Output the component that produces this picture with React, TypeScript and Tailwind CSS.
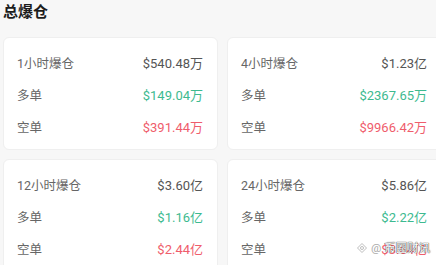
import React from "react";

interface Liq {
  label: string;
  total: string;
  long: string;
  short: string;
}

const data: Liq[] = [
  { label: "1小时爆仓", total: "$540.48万", long: "$149.04万", short: "$391.44万" },
  { label: "4小时爆仓", total: "$1.23亿", long: "$2367.65万", short: "$9966.42万" },
  { label: "12小时爆仓", total: "$3.60亿", long: "$1.16亿", short: "$2.44亿" },
  { label: "24小时爆仓", total: "$5.86亿", long: "$2.22亿", short: "$3.64亿" },
];

function Row({ label, value, color }: { label: string; value: string; color: string }) {
  return (
    <div className="flex h-5 items-center justify-between">
      <span className="text-[12.5px] text-[#666]">{label}</span>
      <span className={`text-[13px] ${color}`}>{value}</span>
    </div>
  );
}

function Card({ item }: { item: Liq }) {
  return (
    <div className="flex h-[113px] flex-col gap-3 rounded-md border border-[#efefef] bg-white pl-[13px] pr-[14px] pt-4">
      <Row label={item.label} value={item.total} color="text-[#555]" />
      <Row label="多单" value={item.long} color="text-[#3dba90]" />
      <Row label="空单" value={item.short} color="text-[#ef5d6c]" />
    </div>
  );
}

export default function App() {
  return (
    <div
      className="relative h-[265px] w-[436px] overflow-hidden bg-[#f7f7f7]"
      style={{ fontFamily: '"Roboto", "Noto Sans CJK SC", sans-serif' }}
    >
      <h2 className="h-6 pl-[3px] text-[15px] font-bold leading-6 text-[#1c1c1c]">总爆仓</h2>
      <div className="mt-[13px] grid w-[450px] grid-cols-[215px_215px] gap-[9px] pl-[3px]">
        {data.map((d) => (
          <Card key={d.label} item={d} />
        ))}
      </div>

      {/* watermark */}
      <div className="absolute left-[356px] top-[240px] flex items-center gap-[3px] whitespace-nowrap text-[11.5px] leading-4 text-white [text-shadow:0_0_1px_#333,0_0_1px_#333]">
        <svg width="12" height="12" viewBox="0 0 16 16" fill="none" stroke="#bbb" strokeWidth="1.3">
          <path d="M8 2 L14 8 L8 14 L2 8 Z" />
          <circle cx="8" cy="8" r="2" />
        </svg>
        <span className="text-[#aaa] [text-shadow:none]">@</span>
        <span>币圈财讯</span>
      </div>
    </div>
  );
}
